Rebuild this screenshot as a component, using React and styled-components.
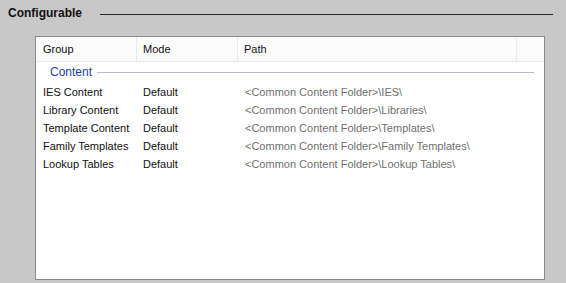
import React from 'react';
import styled, { createGlobalStyle } from 'styled-components';

const GlobalStyle = createGlobalStyle`
  html, body {
    margin: 0;
    padding: 0;
    background: #c8c8c8;
  }
  body {
    font-family: "Liberation Sans", Arial, sans-serif;
    font-size: 11px;
    color: #111;
  }
`;

const Page = styled.div`
  width: 566px;
  height: 283px;
  box-sizing: border-box;
  padding: 6px 0 0 8px;
  display: flex;
  flex-direction: column;
`;

const GroupHeader = styled.div`
  display: flex;
  align-items: center;
  height: 14px;
`;

const GroupTitle = styled.div`
  font-weight: bold;
  font-size: 12px;
  color: #111;
  width: 92px;
`;

const GroupRule = styled.div`
  width: 453px;
  height: 1px;
  background: #2a2a2a;
  margin-top: 3px;
`;

const Panel = styled.div`
  margin: 16px 0 0 27px;
  width: 510px;
  height: 244px;
  box-sizing: border-box;
  border: 1px solid #878a90;
  background: #fff;
  display: flex;
  flex-direction: column;
`;

const HeaderRow = styled.div`
  display: grid;
  grid-template-columns: 101px 101px 279px 1fr;
  height: 24px;
  background: #fbfbfc;
  border-bottom: 1px solid #e6ebf2;
`;

const HeaderCell = styled.div`
  display: flex;
  align-items: center;
  padding-left: ${p => p.$pad || 6}px;
  border-right: ${p => (p.$last ? 'none' : '1px solid #e6ebf2')};
  color: #111;
`;

const GroupRow = styled.div`
  display: flex;
  align-items: center;
  height: 20px;
  padding: 0 10px 0 14px;
`;

const GroupLabel = styled.span`
  color: #1e3ea6;
  font-size: 12px;
  margin-right: 5px;
`;

const GroupLine = styled.div`
  flex: 1;
  height: 1px;
  background: #b6bdcf;
  margin-top: 1px;
`;

const Rows = styled.div`
  padding-top: 1px;
  display: flex;
  flex-direction: column;
`;

const Row = styled.div`
  display: grid;
  grid-template-columns: 101px 101px 1fr;
  height: 18px;
  align-items: center;
`;

const Cell = styled.div`
  padding-left: ${p => p.$pad || 7}px;
  color: ${p => (p.$muted ? '#707070' : '#111')};
  white-space: nowrap;
`;

const rows = [
  { group: 'IES Content', mode: 'Default', path: '<Common Content Folder>\\IES\\' },
  { group: 'Library Content', mode: 'Default', path: '<Common Content Folder>\\Libraries\\' },
  { group: 'Template Content', mode: 'Default', path: '<Common Content Folder>\\Templates\\' },
  { group: 'Family Templates', mode: 'Default', path: '<Common Content Folder>\\Family Templates\\' },
  { group: 'Lookup Tables', mode: 'Default', path: '<Common Content Folder>\\Lookup Tables\\' },
];

export default function App() {
  return (
    <>
      <GlobalStyle />
      <Page>
        <GroupHeader>
          <GroupTitle>Configurable</GroupTitle>
          <GroupRule />
        </GroupHeader>
        <Panel>
          <HeaderRow>
            <HeaderCell $pad={7}>Group</HeaderCell>
            <HeaderCell>Mode</HeaderCell>
            <HeaderCell>Path</HeaderCell>
            <HeaderCell $last />
          </HeaderRow>
          <GroupRow>
            <GroupLabel>Content</GroupLabel>
            <GroupLine />
          </GroupRow>
          <Rows>
            {rows.map(r => (
              <Row key={r.group}>
                <Cell>{r.group}</Cell>
                <Cell $pad={6}>{r.mode}</Cell>
                <Cell $pad={7} $muted>{r.path}</Cell>
              </Row>
            ))}
          </Rows>
        </Panel>
      </Page>
    </>
  );
}
